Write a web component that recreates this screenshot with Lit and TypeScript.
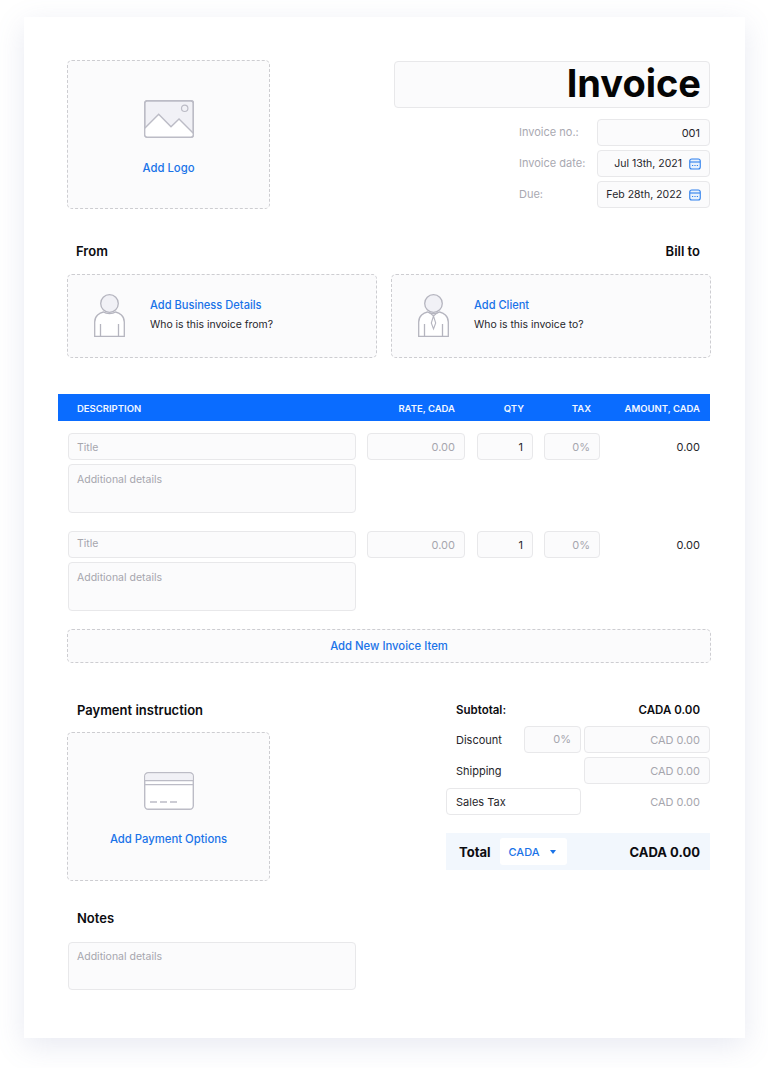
import { LitElement, html, css, svg } from "lit";
import { customElement } from "lit/decorators.js";

const calendar = html`<svg class="cal" width="12" height="12" viewBox="0 0 12 12" fill="none">
  <rect x="0.75" y="1" width="10.5" height="10" rx="2" fill="#e8f1fc" stroke="#2f80ed" stroke-width="1.1"/>
  <path d="M1 4h10" stroke="#2f80ed" stroke-width="1.1"/>
  <path d="M3 7.5h1.2M5.4 7.5h1.2M7.8 7.5h1.2" stroke="#2f80ed" stroke-width="1.1"/>
</svg>`;

const logoIcon = html`<svg width="50" height="38" viewBox="0 0 50 38" fill="none">
  <rect x="0.7" y="0.7" width="48.6" height="36.6" rx="2.5" fill="#f1f1f6" stroke="#bcbcc6" stroke-width="1.4"/>
  <path d="M0.7 28.300L14.700 14.300L27 26.700L35 19L49.300 33.300V34.800a2.500 2.500 0 0 1-2.500 2.500H3.200A2.500 2.500 0 0 1 0.700 34.800Z" fill="#fff"/>
  <path d="M0.7 28.300L14.700 14.300L27 26.700L35 19L49.300 33.300" stroke="#bcbcc6" stroke-width="1.4"/>
  <circle cx="40.700" cy="8.300" r="3.200" stroke="#bcbcc6" stroke-width="1.2"/>
  <rect x="0.7" y="0.7" width="48.6" height="36.6" rx="2.5" stroke="#bcbcc6" stroke-width="1.4"/>
</svg>`;

const personBody = svg`<circle cx="15.500" cy="9.500" r="8.800" fill="#f1f1f6" stroke="#b5b5bf" stroke-width="1.300"/>
  <path d="M0.700 42.300V28C0.700 22 5.500 18.800 9.500 18C12.500 20 18.500 20 21.500 18C25.500 18.800 30.300 22 30.300 28V42.300Z" fill="#fff" stroke="#b5b5bf" stroke-width="1.300"/>
  <path d="M6.500 30V42.300M24.500 30V42.300" stroke="#b5b5bf" stroke-width="1.300"/>`;

const personIcon = html`<svg width="31" height="43" viewBox="0 0 31 43" fill="none">${personBody}</svg>`;
const clientIcon = html`<svg width="31" height="43" viewBox="0 0 31 43" fill="none">${personBody}
  <path d="M15.500 22L13.300 29L15.500 35L17.700 29Z" fill="#fff" stroke="#b5b5bf" stroke-width="1.100"/>
  <path d="M11.500 18.500L15.500 22L19.500 18.500" stroke="#b5b5bf" stroke-width="1.100"/>
</svg>`;

const cardIcon = html`<svg width="50" height="38" viewBox="0 0 50 38" fill="none">
  <rect x="0.7" y="0.7" width="48.6" height="36.6" rx="3.500" fill="#fff" stroke="#bcbcc6" stroke-width="1.400"/>
  <path d="M1.400 8.700V4.200a2.800 2.800 0 0 1 2.800-2.800h41.600a2.800 2.800 0 0 1 2.800 2.800v4.500Z" fill="#f1f1f6"/>
  <path d="M0.700 8.700h48.600M0.700 12.700h48.600" stroke="#bcbcc6" stroke-width="1.200"/>
  <path d="M6 30h7M16 30h7M26 30h7" stroke="#bcbcc6" stroke-width="1.400"/>
</svg>`;

@customElement("app-root")
export class AppRoot extends LitElement {
  static styles = css`
    :host {
      display: block;
      height: 1068px;
      padding-top: 17px;
      box-sizing: border-box;
      background: #fff;
      font-family: Inter, "Liberation Sans", sans-serif;
      color: #1a1a1f;
      overflow: hidden;
    }
    .sheet {
      width: 721px;
      height: 1021px;
      margin-left: 24px;
      box-sizing: border-box;
      padding: 43px 35px 0 43px;
      background: #fff;
      box-shadow: 0 8px 28px rgba(110, 125, 175, 0.16);
    }
    .top { display: flex; justify-content: space-between; }
    .drop {
      box-sizing: border-box;
      border: 1px dashed #cdcdd1;
      border-radius: 5px;
      background: #fbfbfc;
    }
    .logo, .pay {
      width: 203px;
      height: 149px;
      display: flex;
      flex-direction: column;
      align-items: center;
    }
    .logo svg, .pay svg { margin-top: 39px; }
    .link { color: #1a73e8; font-size: 11.300px; font-weight: 500; line-height: 14px; }
    .logo .link { margin-top: 23px; }
    .pay .link { margin-top: 22px; }
    .head { width: 316px; padding-top: 1px; }
    .field {
      box-sizing: border-box;
      border: 1px solid #e8e8ea;
      border-radius: 4px;
      background: #fbfbfc;
      font-size: 11px;
      display: flex;
      align-items: center;
      justify-content: flex-end;
      padding: 0 9px;
      color: #a6a6ae;
      white-space: nowrap;
    }
    .title-box {
      height: 47px;
      font-size: 38px;
      font-weight: 700;
      color: #050505;
      padding: 0 8px 3px 0;
    }
    .meta { display: flex; flex-direction: column; gap: 4px; margin-top: 11px; }
    .meta-row { display: flex; align-items: center; padding-left: 125px; }
    .meta-row span { width: 78px; font-size: 11px; color: #a9a9b1; padding-bottom: 1px; }
    .meta-row .field { width: 113px; height: 27px; color: #26262b; font-size: 10.500px; gap: 7px; padding: 0 8px 0 0; }
    .meta-row .num { padding-right: 9px; font-size: 11px; }
    .parties-head {
      display: flex;
      justify-content: space-between;
      padding: 0 10px 0 9px;
      margin-top: 34px;
      font-size: 13px;
      font-weight: 600;
      line-height: 16px;
      color: #0c0c10;
    }
    .parties { display: flex; gap: 14px; margin-top: 15px; margin-right: -1px; }
    .party { height: 84px; display: flex; align-items: center; padding-left: 26px; gap: 25px; }
    .party.from { width: 310px; }
    .party.to { width: 320px; }
    .party svg { margin-top: -1px; }
    .party .link { font-size: 11.100px; }
    .party p { margin: 6px 0 0; font-size: 10.400px; line-height: 14px; color: #26262b; }
    .party .txt { margin-top: -3px; }
    .thead {
      display: grid;
      grid-template-columns: 289px 89px 69px 67px 1fr;
      height: 27px;
      margin: 36px 0 0 -9px;
      background: #0a6cff;
      color: #f2f7ff;
      font-size: 9.500px;
      font-weight: 600;
      align-items: center;
      text-align: right;
      padding: 1px 10px 0 19px;
      box-sizing: border-box;
    }
    .thead div:first-child { text-align: left; }
    .item { display: grid; grid-template-columns: 288px 99px 56px 56px 1fr; column-gap: 11px; margin-left: 1px; }
    .item .stack { display: flex; flex-direction: column; gap: 4px; }
    .item .field { height: 27px; }
    .item .rate { width: 98px; }
    .item .l { justify-content: flex-start; font-size: 10.500px; padding-left: 8px; }
    .item.one .l { padding-top: 2px; }
    .item .details {
      height: 49px;
      justify-content: flex-start;
      align-items: flex-start;
      padding: 8px 0 0 8px;
      font-size: 10.500px;
    }
    .item .dark { color: #26262b; }
    .amount { height: 27px; display: flex; align-items: center; justify-content: flex-end; padding-right: 10px; font-size: 11px; color: #26262b; }
    .item.one { margin-top: 12px; }
    .item.two { margin-top: 18px; }
    .item.two .l { padding-bottom: 2px; }
    .add {
      height: 34px;
      margin: 18px -1px 0 0;
      display: flex;
      align-items: center;
      justify-content: center;
    }
    .bottom { display: flex; justify-content: space-between; margin-top: 39px; }
    .left { width: 289px; }
    .h {
      font-size: 13px;
      font-weight: 600;
      line-height: 16px;
      color: #0c0c10;
      padding-left: 10px;
    }
    .pay { margin-top: 14px; }
    .notes-h { margin-top: 29px; }
    .notes {
      height: 48px;
      margin: 16px 0 0 1px;
      width: 288px;
      justify-content: flex-start;
      align-items: flex-start;
      padding: 7px 0 0 8px;
      font-size: 10.500px;
    }
    .right { width: 264px; font-size: 11px; color: #26262b; }
    .sub {
      display: flex;
      justify-content: space-between;
      padding: 0 10px;
      height: 16px;
      align-items: center;
      font-weight: 600;
      color: #0c0c10;
      font-size: 11.500px;
    }
    .rows { display: flex; flex-direction: column; gap: 4px; margin-top: 8px; }
    .r { display: grid; grid-template-columns: 135px 126px; column-gap: 3px; height: 27px; align-items: center; }
    .r .lab { padding-left: 10px; }
    .r.disc { grid-template-columns: 75px 57px 126px; }
    .r .field { height: 27px; }
    .r .pct { padding-bottom: 2px; }
    .r .tax { justify-content: flex-start; background: #fff; color: #26262b; }
    .r .plain { text-align: right; padding-right: 10px; color: #a6a6ae; }
    .total {
      display: flex;
      align-items: center;
      height: 37px;
      margin-top: 18px;
      background: #f2f7fd;
      padding: 0 10px 0 13px;
      font-weight: 700;
      color: #0c0c10;
    }
    .total b { font-size: 13px; font-weight: 700; }
    .total .big { margin-left: auto; }
    .select {
      width: 67px;
      height: 27px;
      margin-left: 9px;
      box-sizing: border-box;
      padding-left: 9px;
      background: #fff;
      border-radius: 3px;
      display: flex;
      align-items: center;
      color: #1a73e8;
      font-size: 11px;
      font-weight: 500;
      gap: 10px;
    }
    .tri { width: 0; height: 0; border: 3.500px solid transparent; border-top: 4.500px solid #1a73e8; border-bottom: 0; }
  `;

  private item(cls: string) {
    return html`<div class="item ${cls}">
      <div class="stack">
        <div class="field l">Title</div>
        <div class="field details">Additional details</div>
      </div>
      <div class="field rate">0.00</div>
      <div class="field dark">1</div>
      <div class="field">0%</div>
      <div class="amount">0.00</div>
    </div>`;
  }

  render() {
    return html`<div class="sheet">
      <div class="top">
        <div class="drop logo">${logoIcon}<div class="link">Add Logo</div></div>
        <div class="head">
          <div class="field title-box">Invoice</div>
          <div class="meta">
            <div class="meta-row"><span>Invoice no.:</span><div class="field num">001</div></div>
            <div class="meta-row"><span>Invoice date:</span><div class="field">Jul 13th, 2021 ${calendar}</div></div>
            <div class="meta-row"><span>Due:</span><div class="field">Feb 28th, 2022 ${calendar}</div></div>
          </div>
        </div>
      </div>
      <div class="parties-head"><div>From</div><div>Bill to</div></div>
      <div class="parties">
        <div class="drop party from">${personIcon}<div class="txt"><div class="link">Add Business Details</div><p>Who is this invoice from?</p></div></div>
        <div class="drop party to">${clientIcon}<div class="txt"><div class="link">Add Client</div><p>Who is this invoice to?</p></div></div>
      </div>
      <div class="thead"><div>DESCRIPTION</div><div>RATE, CADA</div><div>QTY</div><div>TAX</div><div>AMOUNT, CADA</div></div>
      ${this.item("one")}
      ${this.item("two")}
      <div class="drop add"><div class="link">Add New Invoice Item</div></div>
      <div class="bottom">
        <div class="left">
          <div class="h">Payment instruction</div>
          <div class="drop pay">${cardIcon}<div class="link">Add Payment Options</div></div>
          <div class="h notes-h">Notes</div>
          <div class="field notes">Additional details</div>
        </div>
        <div class="right">
          <div class="sub"><span>Subtotal:</span><span>CADA 0.00</span></div>
          <div class="rows">
            <div class="r disc"><div class="lab">Discount</div><div class="field pct">0%</div><div class="field">CAD 0.00</div></div>
            <div class="r"><div class="lab">Shipping</div><div class="field">CAD 0.00</div></div>
            <div class="r"><div class="field tax">Sales Tax</div><div class="plain">CAD 0.00</div></div>
          </div>
          <div class="total"><b>Total</b><div class="select">CADA <i class="tri"></i></div><b class="big">CADA 0.00</b></div>
        </div>
      </div>
    </div>`;
  }
}
